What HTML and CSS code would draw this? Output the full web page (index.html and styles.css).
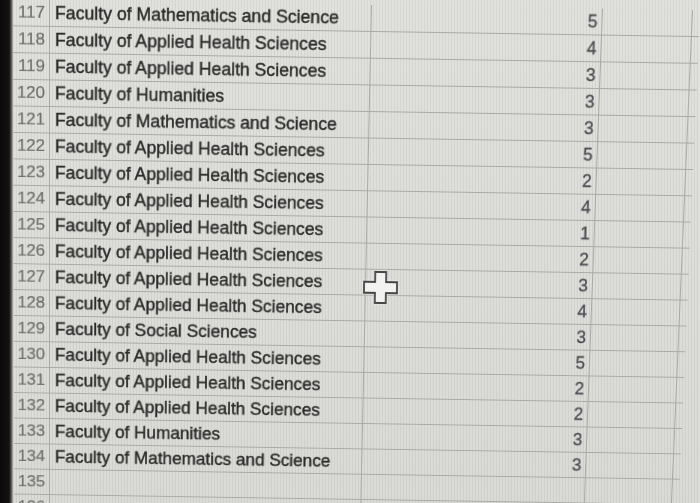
FILE: index.html
```html
<!DOCTYPE html>
<html>
<head>
<meta charset="utf-8">
<link rel="stylesheet" href="styles.css">
</head>
<body>
<div class="bezel"></div>
<div class="viewport">
  <div class="skew">
    <div class="sheet">
      <div class="row"><span class="num">117</span><span class="name">Faculty of Mathematics and Science</span><span class="val">5</span><span class="c4"></span><span class="c5"></span></div>
      <div class="row"><span class="num">118</span><span class="name">Faculty of Applied Health Sciences</span><span class="val">4</span><span class="c4"></span><span class="c5"></span></div>
      <div class="row"><span class="num">119</span><span class="name">Faculty of Applied Health Sciences</span><span class="val">3</span><span class="c4"></span><span class="c5"></span></div>
      <div class="row"><span class="num">120</span><span class="name">Faculty of Humanities</span><span class="val">3</span><span class="c4"></span><span class="c5"></span></div>
      <div class="row"><span class="num">121</span><span class="name">Faculty of Mathematics and Science</span><span class="val">3</span><span class="c4"></span><span class="c5"></span></div>
      <div class="row"><span class="num">122</span><span class="name">Faculty of Applied Health Sciences</span><span class="val">5</span><span class="c4"></span><span class="c5"></span></div>
      <div class="row"><span class="num">123</span><span class="name">Faculty of Applied Health Sciences</span><span class="val">2</span><span class="c4"></span><span class="c5"></span></div>
      <div class="row"><span class="num">124</span><span class="name">Faculty of Applied Health Sciences</span><span class="val">4</span><span class="c4"></span><span class="c5"></span></div>
      <div class="row"><span class="num">125</span><span class="name">Faculty of Applied Health Sciences</span><span class="val">1</span><span class="c4"></span><span class="c5"></span></div>
      <div class="row"><span class="num">126</span><span class="name">Faculty of Applied Health Sciences</span><span class="val">2</span><span class="c4"></span><span class="c5"></span></div>
      <div class="row"><span class="num">127</span><span class="name">Faculty of Applied Health Sciences</span><span class="val">3</span><span class="c4"></span><span class="c5"></span></div>
      <div class="row"><span class="num">128</span><span class="name">Faculty of Applied Health Sciences</span><span class="val">4</span><span class="c4"></span><span class="c5"></span></div>
      <div class="row"><span class="num">129</span><span class="name">Faculty of Social Sciences</span><span class="val">3</span><span class="c4"></span><span class="c5"></span></div>
      <div class="row"><span class="num">130</span><span class="name">Faculty of Applied Health Sciences</span><span class="val">5</span><span class="c4"></span><span class="c5"></span></div>
      <div class="row"><span class="num">131</span><span class="name">Faculty of Applied Health Sciences</span><span class="val">2</span><span class="c4"></span><span class="c5"></span></div>
      <div class="row"><span class="num">132</span><span class="name">Faculty of Applied Health Sciences</span><span class="val">2</span><span class="c4"></span><span class="c5"></span></div>
      <div class="row"><span class="num">133</span><span class="name">Faculty of Humanities</span><span class="val">3</span><span class="c4"></span><span class="c5"></span></div>
      <div class="row"><span class="num">134</span><span class="name">Faculty of Mathematics and Science</span><span class="val">3</span><span class="c4"></span><span class="c5"></span></div>
      <div class="row"><span class="num">135</span><span class="name"></span><span class="val"></span><span class="c4"></span><span class="c5"></span></div>
      <div class="row"><span class="num">136</span><span class="name"></span><span class="val"></span><span class="c4"></span><span class="c5"></span></div>
    </div>
  </div>
</div>
<svg class="cursor" width="36" height="34" viewBox="0 0 36 34">
  <polygon points="12,1 23,1 23,11 34,11 34,22 23,22 23,32 12,32 12,22 1,22 1,11 12,11" fill="#f2f2f0" stroke="#454545" stroke-width="1.8" stroke-linejoin="miter"/>
</svg>
</body>
</html>
```

FILE: styles.css
```css
html, body {
  margin: 0;
  padding: 0;
}

body {
  width: 700px;
  height: 503px;
  overflow: hidden;
  display: flex;
  position: relative;
  background: #dcdcd8;
  font-family: "Liberation Sans", Arial, sans-serif;
}

.bezel {
  flex: none;
  width: 13px;
  background: linear-gradient(90deg, #0b0b0b 0, #121110 9px, #4a4743 11px, #b9b8b3 13px);
}

.viewport {
  flex: 1;
  position: relative;
  overflow: hidden;
  background: repeating-linear-gradient(90deg, rgba(0,0,0,0.05) 0 1px, rgba(255,255,255,0.05) 1px 2px, rgba(255,255,255,0) 2px 3px), linear-gradient(180deg, #e0e0dc 0, #d9d9d5 100%);
}

.skew {
  transform-origin: 37px 0;
  transform: skewY(0.9deg);
}

.sheet {
  transform-origin: 37px 0;
  transform: perspective(1000px) rotateX(-3.8deg);
  filter: blur(0.4px);
}

.row {
  display: flex;
  height: 27px;
  box-sizing: border-box;
  border-bottom: 1px solid #a9a9a5;
}

.row span {
  flex: none;
  box-sizing: border-box;
  height: 26px;
  line-height: 26px;
  border-right: 1px solid #a8a8a4;
  white-space: nowrap;
  overflow: visible;
}

.num {
  width: 37px;
  text-align: right;
  padding-right: 4px;
  font-size: 17px;
  color: #6e6e6c;
  -webkit-text-stroke: 0.2px #6e6e6c;
}

.name {
  width: 322px;
  padding-left: 5px;
  font-size: 17.7px;
  color: #2a2a2a;
  -webkit-text-stroke: 0.4px #2a2a2a;
}

.val {
  width: 231px;
  text-align: right;
  padding-right: 4px;
  font-size: 17.5px;
  color: #4a4c50;
  -webkit-text-stroke: 0.3px #4a4c50;
}

.c4 {
  width: 90px;
}

.c5 {
  width: 80px;
}

.cursor {
  position: absolute;
  left: 363px;
  top: 271px;
  transform: rotate(1deg);
  filter: drop-shadow(0 0 1px rgba(255,255,255,0.9));
}
```
